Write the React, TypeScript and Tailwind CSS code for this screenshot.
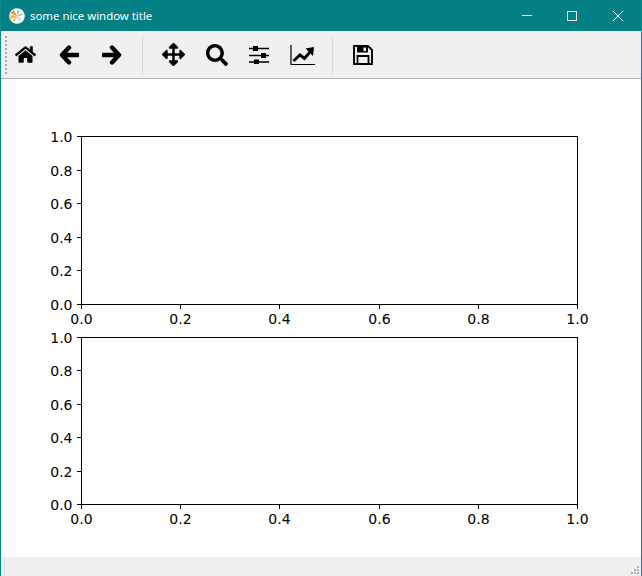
import React from "react";
import { FaHome, FaArrowsAlt, FaSearch } from "react-icons/fa";

const TICKS = ["0.0", "0.2", "0.4", "0.6", "0.8", "1.0"];

// one matplotlib axes, drawn in its own svg
function Axes({ h, className }: { h: number; className: string }) {
  const w = 496;
  const left = 40;
  const top = 8;
  return (
    <svg width={560} height={h + 30} className={className} style={{ fontFamily: '"DejaVu Sans", sans-serif' }}>
      <rect x={left + 0.5} y={top + 0.5} width={w} height={h} fill="white" stroke="black" strokeWidth={1} shapeRendering="crispEdges" />
      {TICKS.map((t, i) => {
        const y = Math.round(top + h - (h * i) / 5) + 0.5;
        const x = Math.round(left + (w * i) / 5) + 0.5;
        return (
          <g key={t}>
            <line x1={left - 4} x2={left} y1={y} y2={y} stroke="black" shapeRendering="crispEdges" />
            <line x1={x} x2={x} y1={top + h} y2={top + h + 5} stroke="black" shapeRendering="crispEdges" />
            <text x={left - 8.5} y={y + 5} textAnchor="end" fontSize={14} fill="#000">{t}</text>
            <text x={x} y={top + h + 20} textAnchor="middle" fontSize={14} fill="#000">{t}</text>
          </g>
        );
      })}
    </svg>
  );
}

function Logo() {
  return (
    <svg width={16} height={16} viewBox="0 0 16 16" className="ml-[9px] shrink-0">
      <circle cx={8} cy={8} r={7.8} fill="white" />
      <path d="M8 8L1.5 5.5A7 7 0 0 1 5 2Z" fill="#f39a3c" />
      <path d="M8 8L1.2 7A7 7 0 0 0 2 11.5Z" fill="#f7b23f" />
      <path d="M8 8L4 12.5L5.5 13.5Z" fill="#e8a23a" />
      <path d="M8 8L8.5 2.5L10.5 3Z" fill="#7fb86a" />
      <path d="M8 8L12.5 5.5L13 7Z" fill="#5aa469" />
      <path d="M8 8L12 11L11 12Z" fill="#8fc1d8" />
      <path d="M8 8L8.5 12L9.5 12Z" fill="#c9b04a" />
    </svg>
  );
}

function ArrowIcon({ flip }: { flip?: boolean }) {
  return (
    <svg width={20} height={20} viewBox="0 0 20 20" className={flip ? "-scale-x-100" : ""}>
      <path d="M10 2.5L3 10L10 17.5M4 10H19" fill="none" stroke="black" strokeWidth={4.4} strokeLinejoin="round" strokeLinecap="round" />
    </svg>
  );
}

function SlidersIcon() {
  return (
    <svg width={20} height={18} viewBox="0 0 20 18" className="-ml-[2px]">
      <g stroke="black" strokeWidth={1.5}>
        <line x1={0} x2={20} y1={2.5} y2={2.5} />
        <line x1={0} x2={20} y1={9.5} y2={9.5} />
        <line x1={0} x2={20} y1={16} y2={16} />
      </g>
      <rect x={4} y={0} width={5} height={5} />
      <rect x={12} y={7} width={5} height={5} />
      <rect x={5} y={13.5} width={5} height={5} />
    </svg>
  );
}

function LinesIcon() {
  return (
    <svg width={25} height={20} viewBox="0 0 25 20">
      <path d="M1 0V19.5H25" fill="none" stroke="black" strokeWidth={1.2} />
      <path d="M3.5 16L10 10L14.5 13.5L20 7" fill="none" stroke="black" strokeWidth={3} />
      <path d="M15.5 3.5L24 2L23 11Z" />
    </svg>
  );
}

function SaveIcon() {
  return (
    <svg width={20} height={20} viewBox="0 0 20 20" className="-ml-[2px]">
      <path d="M1 1H15L19 5V19H1Z" fill="none" stroke="black" strokeWidth={1.9} />
      <path d="M4 1.5H15V7.5H4Z" />
      <rect x={10.5} y={2.5} width={2.5} height={3.5} fill="#f0f0f0" />
      <path d="M4.5 18.5V11H15.5V18.5" fill="none" stroke="black" strokeWidth={1.8} />
    </svg>
  );
}

function ToolButton({ children }: { children: React.ReactNode }) {
  return <div className="w-[43px] h-[32px] flex items-center justify-center shrink-0">{children}</div>;
}

export default function App() {
  return (
    <div className="w-[642px] h-[576px] flex flex-col overflow-hidden bg-white border-x border-[#0a8a8a]" style={{ fontFamily: '"Noto Sans", sans-serif' }}>
      {/* title bar */}
      <div className="h-[31px] shrink-0 -mx-px flex items-center bg-[#028083] text-white">
        <Logo />
        <span className="ml-[5px] text-[11.4px] leading-none">some nice window title</span>
        <div className="ml-auto flex items-center h-full pr-px">
          <div className="w-[44px] flex justify-center">
            <div className="w-[10px] h-px bg-white" />
          </div>
          <div className="w-[46px] flex justify-center">
            <div className="w-[10px] h-[10px] border border-white" />
          </div>
          <div className="w-[46px] flex justify-center">
            <svg width={10} height={10} viewBox="0 0 10 10">
              <path d="M0 0L10 10M10 0L0 10" stroke="white" strokeWidth={1} />
            </svg>
          </div>
        </div>
      </div>

      {/* toolbar */}
      <div className="h-[48px] shrink-0 flex items-center bg-[#f0f0f0] border-b border-[#b4b4b4]">
        <div className="w-[2px] h-[38px] ml-[4px] mr-[-3px] shrink-0 border-l-2 border-dotted border-[#a8a8a8]" />
        <ToolButton><FaHome size={21} /></ToolButton>
        <ToolButton><ArrowIcon /></ToolButton>
        <ToolButton><ArrowIcon flip /></ToolButton>
        <div className="w-px h-[38px] bg-[#d8d8d8] mx-[9px] shrink-0" />
        <ToolButton><FaArrowsAlt size={23} /></ToolButton>
        <ToolButton><FaSearch size={22} /></ToolButton>
        <ToolButton><SlidersIcon /></ToolButton>
        <ToolButton><LinesIcon /></ToolButton>
        <div className="w-px h-[38px] bg-[#d8d8d8] ml-[8px] mr-[9px] shrink-0" />
        <ToolButton><SaveIcon /></ToolButton>
      </div>

      {/* canvas */}
      <div className="flex-1 flex flex-col pl-[40px] pt-[49px]">
        <Axes h={168} className="block shrink-0" />
        <Axes h={167} className="block shrink-0 mt-[3px]" />
      </div>

      {/* status bar */}
      <div className="h-[19px] shrink-0 flex items-stretch justify-between bg-[#f0f0f0]">
        <div className="ml-[3px] w-px bg-[#dcdcdc]" />
        <svg width={10} height={10} viewBox="0 0 10 10" className="self-end mr-px mb-px">
          <g fill="#b0b0b0">
            <rect x={7} y={1} width={2} height={2} />
            <rect x={4} y={4} width={2} height={2} />
            <rect x={7} y={4} width={2} height={2} />
            <rect x={1} y={7} width={2} height={2} />
            <rect x={4} y={7} width={2} height={2} />
            <rect x={7} y={7} width={2} height={2} />
          </g>
        </svg>
      </div>
    </div>
  );
}
